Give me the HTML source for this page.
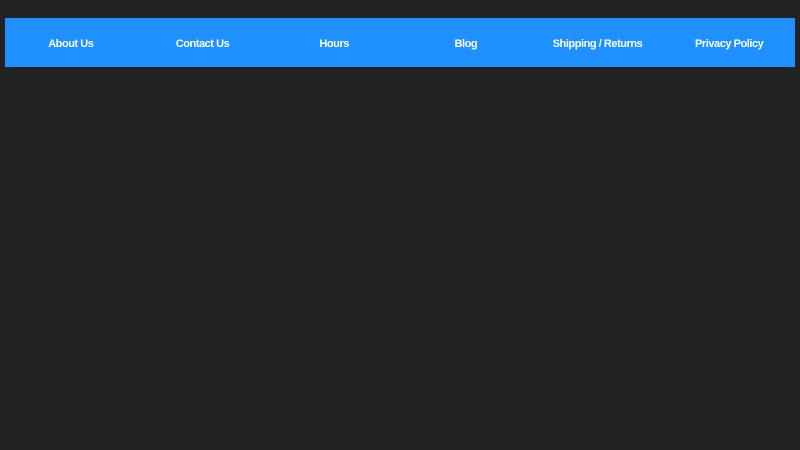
<!DOCTYPE html>
<html><head><style>
html,body{margin:0;padding:0;background:#222222;width:800px;height:450px;overflow:hidden}
nav{position:absolute;left:5px;top:18px;width:790px;height:49px;background:#1e90ff;display:flex}
nav a{flex:1;display:flex;align-items:center;justify-content:center;color:#fff;text-decoration:none;font-family:"Liberation Sans",sans-serif;font-weight:bold;font-size:11px;letter-spacing:-0.45px;line-height:1;padding-top:3px}
</style></head><body>
<nav><a>About Us</a><a>Contact Us</a><a>Hours</a><a>Blog</a><a>Shipping / Returns</a><a>Privacy Policy</a></nav>
</body></html>
